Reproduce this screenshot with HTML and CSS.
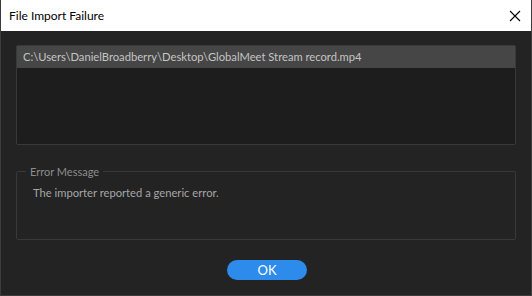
FILE: index.html
```html
<!DOCTYPE html>
<html lang="en">
<head>
    <meta charset="UTF-8">
    <title>File Import Failure</title>
    <link rel="stylesheet" href="styles.css">
</head>
<body>
    <div class="dialog">
        <div class="title-bar">
            <span class="title">File Import Failure</span>
            <span class="close-btn">
                <svg width="12" height="12" viewBox="0 0 12 12"><path d="M1 1L11 11M11 1L1 11" stroke="#000" stroke-width="1.1" fill="none"/></svg>
            </span>
        </div>
        <div class="content">
            <div class="file-list">
                <div class="file-row selected">C:\Users\DanielBroadberry\Desktop\GlobalMeet Stream record.mp4</div>
            </div>

            <fieldset class="error-group">
                <legend>Error Message</legend>
                <p>The importer reported a generic error.</p>
            </fieldset>

            <div class="actions">
                <button class="ok-button">OK</button>
            </div>
        </div>
    </div>
</body>
</html>
```

FILE: styles.css
```css
body {
    margin: 0;
    padding: 0;
    width: 532px;
    height: 296px;
    overflow: hidden;
    background-color: #232323;
    font-family: Lato, "Open Sans", Arial, sans-serif;
}

.dialog {
    width: 532px;
    height: 296px;
    box-sizing: border-box;
    border: 1px solid #3c3c3c;
    border-top: none;
    background-color: #232323;
    display: flex;
    flex-direction: column;
}

.title-bar {
    height: 31px;
    background-color: #fff;
    display: flex;
    align-items: center;
    justify-content: space-between;
    padding: 0 9px 0 8px;
    box-sizing: border-box;
}

.title {
    font-size: 12px;
    color: #000;
}

.close-btn {
    display: flex;
    align-items: center;
    margin-right: 1px;
}

.content {
    padding: 14px 15px 0 15px;
    display: flex;
    flex-direction: column;
}

.file-list {
    height: 100px;
    box-sizing: border-box;
    border: 1px solid #393939;
    border-radius: 2px;
    background-color: #1d1d1d;
}

.file-row {
    height: 22px;
    line-height: 22px;
    padding-left: 6px;
    font-size: 11.2px;
    color: #c4c4c4;
    white-space: nowrap;
}

.file-row.selected {
    background-color: #464646;
}

.error-group {
    margin: 20px 0 0 0;
    padding: 8px 16px 0 16px;
    height: 75px;
    box-sizing: border-box;
    border: 1px solid #393939;
    border-radius: 2px;
}

.error-group legend {
    padding: 0 4px;
    margin-left: -7px;
    font-size: 11px;
    color: #8c8c8c;
}

.error-group p {
    margin: 0;
    font-size: 11.2px;
    color: #a6a6a6;
}

.actions {
    display: flex;
    justify-content: center;
    margin-top: 20px;
}

.ok-button {
    width: 80px;
    height: 20px;
    border: none;
    border-radius: 10px;
    background-color: #2d8ceb;
    color: #fff;
    font-family: inherit;
    font-size: 13px;
    padding: 0;
    margin-left: 2px;
}
```
